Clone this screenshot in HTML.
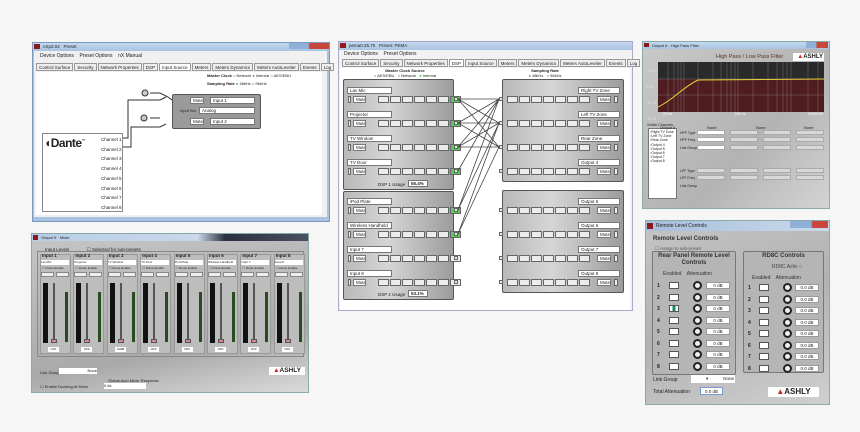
<!DOCTYPE html><html><head><meta charset="utf-8"><style>
*{margin:0;padding:0;box-sizing:border-box}
body{width:860px;height:432px;background:#f6f6f6;position:relative;overflow:hidden;font-family:"Liberation Sans",sans-serif;font-size:5px;color:#222}
.a{position:absolute}
.tb{background:linear-gradient(#c4d8ee,#a9c3e2);}
.blk{background:linear-gradient(90deg,#b9b9b9,#d6d6d6 40%,#9c9c9c);border:1px solid #555;border-radius:2px}
.box{position:absolute;width:11px;height:7px;background:#ececec;border:1px solid #666}
.lbl{position:absolute;background:#fff;border:1px solid #777;height:7px;font-size:4.5px;line-height:6px;padding-left:2px;white-space:nowrap;overflow:hidden}
.tab{display:inline-block;border:1px solid #999;background:#eee;padding:0 2px;height:8px;line-height:7px;font-size:4.5px;margin-right:1px}
</style></head><body>

<!-- Window 1 -->
<div class="a" style="left:32px;top:42px;width:298px;height:180px;background:#a8c2e0;border:1px solid #7a9ac0"></div>
<div class="a tb" style="left:33px;top:43px;width:296px;height:8px;font-size:4.5px;line-height:8px;padding-left:10px">nXp3.02 &nbsp; Preset</div>
<div class="a" style="left:34px;top:44px;width:6px;height:5px;background:#8b1a1a"></div>
<div class="a" style="left:289px;top:43px;width:40px;height:6px;background:linear-gradient(90deg,#8fb0d8 0 48%,#c8463a 52%)"></div>
<div class="a" style="left:34px;top:51px;width:293px;height:166px;background:#f0f0f0"></div>
<div class="a" style="left:40px;top:53px;font-size:5px">Device Options &nbsp;&nbsp; Preset Options &nbsp;&nbsp; nX Manual</div>
<div class="a" style="left:36px;top:63px;width:290px;white-space:nowrap"><span class="tab">Control Surface</span><span class="tab">Security</span><span class="tab">Network Properties</span><span class="tab">DSP</span><span class="tab" style="background:#fff">Input Source</span><span class="tab">Meters</span><span class="tab">Meters Dynamics</span><span class="tab">Meters AutoLeveler</span><span class="tab">Events</span><span class="tab">Log</span></div>
<div class="a" style="left:36px;top:72px;width:286px;height:143px;background:#fff"></div>
<div class="a" style="left:207px;top:73px;font-size:4px"><b>Master Clock</b> ○ Network <span style="color:#3a3">●</span> Internal ○ AES/EBU</div>
<div class="a" style="left:207px;top:81px;font-size:4px"><b>Sampling Rate</b> <span style="color:#3a3">●</span> 48kHz ○ 96kHz</div>
<div class="a" style="left:172px;top:94px;width:89px;height:35px;background:#9a9a9a;border:1px solid #555;border-radius:2px"></div>
<div class="a lbl" style="left:190px;top:97px;width:14px">Mute</div><div class="a lbl" style="left:210px;top:97px;width:45px">Input 1</div>
<div class="a" style="left:180px;top:108px;font-size:4px">Input Src</div><div class="a lbl" style="left:199px;top:107px;width:56px">Analog</div>
<div class="a lbl" style="left:190px;top:118px;width:14px">Mute</div><div class="a lbl" style="left:210px;top:118px;width:45px">Input 2</div>
<svg class="a" style="left:0;top:0" width="340" height="230"><g stroke="#333" stroke-width="1" fill="none"><path d="M123 138H128V100H160L166 97M123 147H131V127H160L166 124M150 93H160L168 97 172 100M150 118H160"/><circle cx="145" cy="93" r="3" fill="#ccc"/><circle cx="144" cy="118" r="3" fill="#ccc"/></g></svg>
<div class="a" style="left:42px;top:133px;width:81px;height:79px;background:#fff;border:1px solid #888"></div>
<div class="a" style="left:44px;top:136px;font-size:12px;font-weight:bold;letter-spacing:-.5px">◖Dante<sup style="font-size:4px">™</sup></div>
<div class="a" style="left:101px;top:135px;font-size:4.5px;line-height:9.7px">Channel 1<br>Channel 2<br>Channel 3<br>Channel 4<br>Channel 5<br>Channel 6<br>Channel 7<br>Channel 8</div>

<!-- Window 2 -->
<div class="a" style="left:338px;top:41px;width:295px;height:270px;background:#f2f2f2;border:1px solid #aac"></div>
<div class="a tb" style="left:339px;top:42px;width:293px;height:8px;font-size:4.5px;line-height:8px;padding-left:10px">pema0.25.70 &nbsp; Preset: PEMA</div>
<div class="a" style="left:340px;top:43px;width:6px;height:5px;background:#8b1a1a"></div>
<div class="a" style="left:344px;top:51px;font-size:5px">Device Options &nbsp;&nbsp; Preset Options</div>
<div class="a" style="left:342px;top:59px;width:290px;white-space:nowrap"><span class="tab">Control Surface</span><span class="tab">Security</span><span class="tab">Network Properties</span><span class="tab" style="background:#fff">DSP</span><span class="tab">Input Source</span><span class="tab">Meters</span><span class="tab">Meters Dynamics</span><span class="tab">Meters AutoLeveler</span><span class="tab">Events</span><span class="tab">Log</span></div>
<div class="a" style="left:340px;top:68px;width:290px;height:242px;background:#fff"></div>
<div class="a" style="left:360px;top:69px;font-size:4px;line-height:4.5px;text-align:center;width:90px"><b>Master Clock Source</b><br>○ AES/EBU &nbsp; ○ Network &nbsp; <span style="color:#3a3">●</span> Internal</div>
<div class="a" style="left:515px;top:69px;font-size:4px;line-height:4.5px;text-align:center;width:60px"><b>Sampling Rate</b><br><span style="color:#3a3">●</span> 48kHz &nbsp; ○ 96kHz</div>
<div id="dsp"></div>
<svg class="a" style="left:0;top:0" width="640" height="320" id="wires"></svg>

<!-- Window 3 -->
<div class="a" style="left:642px;top:41px;width:188px;height:168px;background:linear-gradient(135deg,#c9c9c9,#b3b3b3 60%,#d4d4d4);border:1px solid #8aa"></div>
<div class="a tb" style="left:643px;top:42px;width:186px;height:7px;font-size:4px;line-height:7px;padding-left:9px">Output 6 · High Pass Filter</div>
<div class="a" style="left:644px;top:43px;width:5px;height:4px;background:#8b1a1a"></div>
<div class="a" style="left:806px;top:42px;width:22px;height:6px;background:linear-gradient(90deg,#8fb0d8 0 45%,#c8463a 50%)"></div>
<div class="a" style="left:716px;top:54px;font-size:5.5px;color:#532">High Pass / Low Pass Filter</div>
<div class="a" style="left:793px;top:53px;width:31px;height:8px;background:#fff;font-size:6px;font-weight:bold;line-height:8px;text-align:right;padding-right:1px"><span style="color:#c22">▲</span>ASHLY</div>
<div class="a" style="left:658px;top:62px;width:166px;height:17px;background:#2a2a2a"></div>
<div class="a" style="left:658px;top:79px;width:166px;height:33px;background:#4f1c20"></div>
<div class="a" style="left:646px;top:63px;font-size:3.5px;color:#ddd;line-height:16px">+20 dB<br>0 dB<br>-20 dB<br>-40 dB</div>
<svg class="a" style="left:658px;top:62px" width="166" height="50"><g stroke="#999" stroke-width=".4" opacity=".8"><path d="M10 0V50M16 0V50M20 0V50M23 0V50M26 0V50M40 0V50M55 0V50M63 0V50M69 0V50M73 0V50M77 0V50M80 0V50M95 0V50M110 0V50M119 0V50M125 0V50M129 0V50M133 0V50M150 0V50M160 0V50M0 17H166M0 33H166"/></g><path d="M0 45C15 38 25 25 40 18 L166 17" stroke="#e6d23a" fill="none" stroke-width="1"/></svg>
<div class="a" style="left:663px;top:112px;font-size:3.5px;color:#fff;width:160px;display:flex;justify-content:space-between"><span>20 Hz</span><span>200 Hz</span><span>20000 Hz</span></div>
<div class="a" style="left:647px;top:123px;font-size:3.5px">Visible Channels</div>
<div class="a" style="left:648px;top:128px;width:29px;height:71px;background:#fff;border:1px solid #777;font-size:3.5px;line-height:4.2px;padding:1px">▫Right TV Zone<br>▫Left TV Zone<br>▫Rear Zone<br>▫Output 4<br>▫Output 5<br>▫Output 6<br>▫Output 7<br>▫Output 8</div>
<div id="w3"></div>

<!-- Window 4 -->
<div class="a" style="left:645px;top:220px;width:185px;height:185px;background:linear-gradient(160deg,#c5c5c5,#b2b2b2 50%,#cfcfcf);border:1px solid #8aa"></div>
<div class="a tb" style="left:646px;top:221px;width:183px;height:10px;font-size:5px;line-height:10px;padding-left:10px;background:linear-gradient(90deg,#a6bedc,#cbdaea)">Remote Level Controls</div>
<div class="a" style="left:647px;top:223px;width:6px;height:6px;background:#8b1a1a"></div>
<div class="a" style="left:790px;top:221px;width:38px;height:7px;background:linear-gradient(90deg,#8fb0d8 0 55%,#c8463a 60%)"></div>
<div class="a" style="left:653px;top:236px;font-size:6px;font-weight:bold;color:#333">Remote Level Controls</div>
<div class="a" style="left:655px;top:246px;font-size:4.5px;color:#555">☐ Assign to sub-preset</div>
<div class="a" style="left:652px;top:251px;width:84px;height:124px;border:1px solid #777;border-radius:2px;background:#b5b5b5"></div>
<div class="a" style="left:743px;top:251px;width:81px;height:122px;border:1px solid #777;border-radius:2px;background:#b5b5b5"></div>
<div class="a" style="left:652px;top:253px;width:84px;text-align:center;font-size:6px;font-weight:bold;line-height:7px;color:#333">Rear Panel Remote Level Controls</div>
<div class="a" style="left:743px;top:253px;width:81px;text-align:center;font-size:6px;font-weight:bold;color:#333">RD8C Controls</div>
<div class="a" style="left:772px;top:264px;font-size:5px;color:#444">RD8C Activ ○</div>
<div class="a" style="left:663px;top:271px;font-size:5px;color:#333">Enabled &nbsp;&nbsp; Attenuation</div>
<div class="a" style="left:752px;top:275px;font-size:5px;color:#333">Enabled &nbsp;&nbsp; Attenuation</div>
<div id="w4"></div>
<div class="a" style="left:653px;top:377px;font-size:5px">Link Group</div>
<div class="a" style="left:691px;top:375px;width:44px;height:8px;background:#fff;font-size:4.5px;line-height:8px;text-align:right;padding-right:1px">▾ &nbsp;&nbsp;&nbsp;&nbsp;&nbsp;&nbsp;&nbsp;&nbsp;&nbsp;&nbsp; None</div>
<div class="a" style="left:653px;top:389px;font-size:5px">Total Attenuation</div>
<div class="a" style="left:700px;top:387px;width:23px;height:8px;background:#fff;border:1px solid #79c;font-size:4.5px;line-height:7px;text-align:center">0.0 dB</div>
<div class="a" style="left:768px;top:387px;width:51px;height:10px;background:#fff;font-size:8px;font-weight:bold;line-height:10px;text-align:center"><span style="color:#c22">▲</span>ASHLY</div>

<!-- Window 5 -->
<div class="a" style="left:31px;top:233px;width:278px;height:160px;background:linear-gradient(170deg,#c6c6c6,#a9a9a9 70%,#dadada);border:1px solid #8aa"></div>
<div class="a" style="left:32px;top:234px;width:276px;height:7px;background:linear-gradient(90deg,#b8cde6,#c9d8ea 60%,#2a3040 70%,#4a5060);font-size:4px;line-height:7px;padding-left:9px">Output 5 · Mixer</div>
<div class="a" style="left:33px;top:235px;width:5px;height:5px;background:#8b1a1a"></div>
<div class="a" style="left:45px;top:247px;font-size:4.5px">Input Levels &nbsp;&nbsp;&nbsp;&nbsp;&nbsp;&nbsp;&nbsp;&nbsp;&nbsp;&nbsp;&nbsp;&nbsp; ☐ Selected for sub-presets</div>
<div class="a" style="left:37px;top:251px;width:267px;height:106px;border:1px solid #888"></div>
<div id="w5"></div>
<div class="a" style="left:40px;top:370px;font-size:4px">Link Group</div>
<div class="a" style="left:59px;top:368px;width:38px;height:6px;background:#fff;font-size:4px;line-height:6px;text-align:right">None</div>
<div class="a" style="left:108px;top:378px;font-size:4px">Global Auto Mixer Response</div>
<div class="a" style="left:104px;top:383px;width:42px;height:6px;background:#fff;font-size:4px;line-height:6px">0.6s</div>
<div class="a" style="left:40px;top:384px;font-size:4px">☐ Enable Ducking At Mixer</div>
<div class="a" style="left:269px;top:367px;width:36px;height:8px;background:#fff;font-size:6.5px;font-weight:bold;line-height:8px;text-align:center"><span style="color:#c22">▲</span>ASHLY</div>

<script>
function add(par,html){document.getElementById(par).insertAdjacentHTML('beforeend',html)}
var d='';
function blk(x,y,w,h){d+='<div class="a blk" style="left:'+x+'px;top:'+y+'px;width:'+w+'px;height:'+h+'px"></div>'}
blk(343,79,111,111);blk(343,191,111,109);blk(502,79,122,103);blk(502,190,122,103);
var L=[['Lav Mic',87],['Projector',111],['TV Window',135],['TV Door',159],['iPod Plate',198],['Wireless Handheld',222],['Input 7',246],['Input 8',270]];
L.forEach(function(c,i){var y=c[1];
 d+='<div class="lbl" style="left:347px;top:'+y+'px;width:45px">'+c[0]+'</div>';
 d+='<div class="box" style="left:348px;top:'+(y+9)+'px;width:3px"></div><div class="lbl" style="left:353px;top:'+(y+9)+'px;width:13px">Mute</div>';
 for(var k=0;k<7;k++)d+='<div class="box" style="left:'+(378+k*12)+'px;top:'+(y+9)+'px;'+(k==6&&i!=6&&i!=7?'background:#5c5':'')+'"></div>';
 d+='<div class="box" style="left:454px;top:'+(y+10)+'px;width:4px;height:4px"></div>';});
var R=[['Right TV Zone',87],['Left TV Zone',111],['Rear Zone',135],['Output 4',159],['Output 5',198],['Output 6',222],['Output 7',246],['Output 8',270]];
R.forEach(function(c){var y=c[1];
 d+='<div class="lbl" style="left:578px;top:'+y+'px;width:42px">'+c[0]+'</div>';
 d+='<div class="box" style="left:499px;top:'+(y+10)+'px;width:4px;height:4px"></div>';
 for(var k=0;k<7;k++)d+='<div class="box" style="left:'+(507+k*12)+'px;top:'+(y+9)+'px"></div>';
 d+='<div class="lbl" style="left:597px;top:'+(y+9)+'px;width:14px">Mute</div><div class="box" style="left:614px;top:'+(y+9)+'px;width:4px"></div>';});
d+='<div class="a" style="left:378px;top:182px;font-size:4.5px">DSP 1 Usage</div><div class="lbl" style="left:408px;top:180px;width:20px;font-weight:bold">55.4%</div>';
d+='<div class="a" style="left:378px;top:292px;font-size:4.5px">DSP 2 Usage</div><div class="lbl" style="left:408px;top:290px;width:20px;font-weight:bold">53.1%</div>';
add('dsp',d);
var w='',ls=[[0,0],[0,1],[0,2],[1,0],[1,1],[2,2],[2,0],[3,0],[4,0],[4,1],[5,1],[5,2],[1,2],[2,1]];
ls.forEach(function(p){w+='<line x1="458" y1="'+(L[p[0]][1]+12)+'" x2="499" y2="'+(R[p[1]][1]+12)+'" stroke="#444" stroke-width=".8"/>'});
document.getElementById('wires').innerHTML=w;
var e='',cols=[668,715,764,812];['Output 6','None','None','None'].forEach(function(t,i){e+='<div class="a" style="left:'+(cols[i]-8)+'px;top:125px;font-size:4px">'+t+'</div>'});
[[131,'HPF Type'],[138,'HPF Freq'],[146,'Link Group'],[169,'LPF Type'],[176,'LPF Freq'],[184,'Link Group']].forEach(function(r){e+='<div class="a" style="left:680px;top:'+r[0]+'px;font-size:3.5px">'+r[1]+'</div>';
 if(r[1]!='Link Group'||r[0]<150)for(var i=0;i<4;i++)e+='<div class="a" style="left:'+(697+i*33)+'px;top:'+(r[0]-1)+'px;width:28px;height:5px;background:'+(i==0&&r[0]<150?'#fff':'#d8d8d8')+';border:1px solid #aaa"></div>';});
add('w3',e);
var f='';for(var i=0;i<8;i++){var y=284+i*11.5;
 f+='<div class="a" style="left:657px;top:'+(y-1)+'px;font-size:5px;font-weight:bold">'+(i+1)+'</div><div class="a" style="left:669px;top:'+(y-2)+'px;width:10px;height:7px;background:#fff;border:1px solid #555'+(i==2?';background:linear-gradient(90deg,#fff 30%,#186 30% 70%,#fff 70%)':'')+'"></div>';
 f+='<div class="a" style="left:693px;top:'+(y-3)+'px;width:9px;height:9px;border-radius:50%;background:#eee;border:2px solid #222"></div><div class="a" style="left:706px;top:'+(y-2)+'px;width:24px;height:7px;background:#fff;border:1px solid #999;font-size:4.5px;text-align:center;line-height:6px">0 dB</div>';
 var y2=y+2;
 f+='<div class="a" style="left:748px;top:'+(y2-1)+'px;font-size:5px;font-weight:bold">'+(i+1)+'</div><div class="a" style="left:759px;top:'+(y2-2)+'px;width:10px;height:7px;background:#fff;border:1px solid #555"></div>';
 f+='<div class="a" style="left:783px;top:'+(y2-3)+'px;width:9px;height:9px;border-radius:50%;background:#eee;border:2px solid #222"></div><div class="a" style="left:795px;top:'+(y2-2)+'px;width:24px;height:7px;background:#fff;border:1px solid #999;font-size:4.5px;text-align:center;line-height:6px">0.0 dB</div>';}
add('w4',f);
var g='',nm=['Lav Mic','Projector','TV Window','TV Door','iPod Plate','Wireless Handheld','Input 7','Input 8'];
for(var i=0;i<8;i++){var x=40+i*33.4;
 g+='<div class="a" style="left:'+x+'px;top:254px;width:31px;height:100px;border:1px solid #999;background:#bdbdbd"></div>';
 g+='<div class="a" style="left:'+(x+2)+'px;top:253px;font-size:4.5px;font-weight:bold">Input '+(i+1)+'</div>';
 g+='<div class="a" style="left:'+(x+1)+'px;top:260px;width:28px;height:5px;background:#fff;font-size:3px;line-height:5px;overflow:hidden;white-space:nowrap">'+nm[i]+'</div>';
 g+='<div class="a" style="left:'+(x+2)+'px;top:266px;font-size:3px">☐ Route Enable</div>';
 g+='<div class="a" style="left:'+(x+1)+'px;top:272px;width:13px;height:5px;background:#eee;border:1px solid #888"></div><div class="a" style="left:'+(x+16)+'px;top:272px;width:13px;height:5px;background:#eee;border:1px solid #888"></div>';
 g+='<div class="a" style="left:'+(x+3)+'px;top:283px;width:5px;height:60px;background:#111"></div>';
 g+='<div class="a" style="left:'+(x+13)+'px;top:283px;width:2px;height:60px;background:#555"></div><div class="a" style="left:'+(x+11)+'px;top:339px;width:6px;height:4px;background:#d88;border:1px solid #555"></div>';
 g+='<div class="a" style="left:'+(x+25)+'px;top:292px;width:3px;height:50px;background:#2a4a22"></div>';
 g+='<div class="a" style="left:'+(x+8)+'px;top:347px;width:11px;height:5px;background:#fff;font-size:3px;line-height:5px;text-align:center">'+(i==2?'-60dB':'OFF')+'</div>';}
add('w5',g);
</script>
</body></html>
